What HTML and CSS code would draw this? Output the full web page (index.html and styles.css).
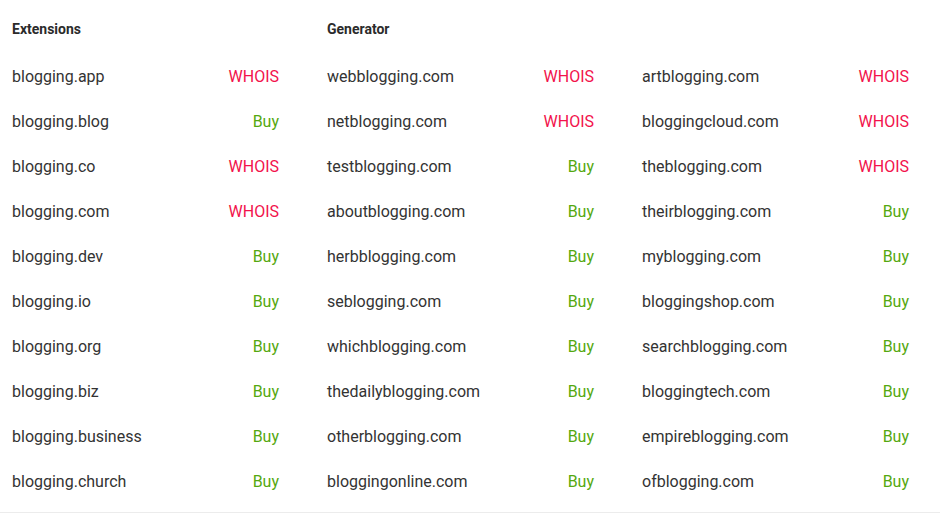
FILE: index.html
```html
<!DOCTYPE html>
<html>
<head>
<meta charset="utf-8">
<link rel="stylesheet" href="styles.css">
</head>
<body>
<div class="wrap">
  <div class="col">
    <div class="head">Extensions</div>
    <div class="row"><span class="name">blogging.app</span><a class="whois">WHOIS</a></div>
    <div class="row"><span class="name">blogging.blog</span><a class="buy">Buy</a></div>
    <div class="row"><span class="name">blogging.co</span><a class="whois">WHOIS</a></div>
    <div class="row"><span class="name">blogging.com</span><a class="whois">WHOIS</a></div>
    <div class="row"><span class="name">blogging.dev</span><a class="buy">Buy</a></div>
    <div class="row"><span class="name">blogging.io</span><a class="buy">Buy</a></div>
    <div class="row"><span class="name">blogging.org</span><a class="buy">Buy</a></div>
    <div class="row"><span class="name">blogging.biz</span><a class="buy">Buy</a></div>
    <div class="row"><span class="name">blogging.business</span><a class="buy">Buy</a></div>
    <div class="row"><span class="name">blogging.church</span><a class="buy">Buy</a></div>
  </div>
  <div class="col">
    <div class="head">Generator</div>
    <div class="row"><span class="name">webblogging.com</span><a class="whois">WHOIS</a></div>
    <div class="row"><span class="name">netblogging.com</span><a class="whois">WHOIS</a></div>
    <div class="row"><span class="name">testblogging.com</span><a class="buy">Buy</a></div>
    <div class="row"><span class="name">aboutblogging.com</span><a class="buy">Buy</a></div>
    <div class="row"><span class="name">herbblogging.com</span><a class="buy">Buy</a></div>
    <div class="row"><span class="name">seblogging.com</span><a class="buy">Buy</a></div>
    <div class="row"><span class="name">whichblogging.com</span><a class="buy">Buy</a></div>
    <div class="row"><span class="name">thedailyblogging.com</span><a class="buy">Buy</a></div>
    <div class="row"><span class="name">otherblogging.com</span><a class="buy">Buy</a></div>
    <div class="row"><span class="name">bloggingonline.com</span><a class="buy">Buy</a></div>
  </div>
  <div class="col">
    <div class="head">&nbsp;</div>
    <div class="row"><span class="name">artblogging.com</span><a class="whois">WHOIS</a></div>
    <div class="row"><span class="name">bloggingcloud.com</span><a class="whois">WHOIS</a></div>
    <div class="row"><span class="name">theblogging.com</span><a class="whois">WHOIS</a></div>
    <div class="row"><span class="name">theirblogging.com</span><a class="buy">Buy</a></div>
    <div class="row"><span class="name">myblogging.com</span><a class="buy">Buy</a></div>
    <div class="row"><span class="name">bloggingshop.com</span><a class="buy">Buy</a></div>
    <div class="row"><span class="name">searchblogging.com</span><a class="buy">Buy</a></div>
    <div class="row"><span class="name">bloggingtech.com</span><a class="buy">Buy</a></div>
    <div class="row"><span class="name">empireblogging.com</span><a class="buy">Buy</a></div>
    <div class="row"><span class="name">ofblogging.com</span><a class="buy">Buy</a></div>
  </div>
</div>
</body>
</html>
```
FILE: styles.css
```css
html, body {
  margin: 0;
  padding: 0;
  background: #fff;
}
body {
  font-family: Roboto, "Liberation Sans", sans-serif;
  color: #333;
}
.wrap {
  width: 897px;
  padding: 18px 31px 8px 12px;
  border-bottom: 1px solid #ececec;
  display: grid;
  grid-template-columns: repeat(3, 267px);
  column-gap: 48px;
}
.col {
  display: flex;
  flex-direction: column;
}
.head {
  font-size: 14px;
  font-weight: 700;
  line-height: 20px;
  height: 20px;
  margin-top: 1px;
  margin-bottom: 15px;
  color: #2b2b2b;
}
.row {
  height: 45px;
  display: flex;
  align-items: center;
  justify-content: space-between;
  font-size: 16px;
}
.name {
  color: #333;
}
.whois {
  color: #f2134b;
}
.buy {
  color: #55a80f;
}
```
